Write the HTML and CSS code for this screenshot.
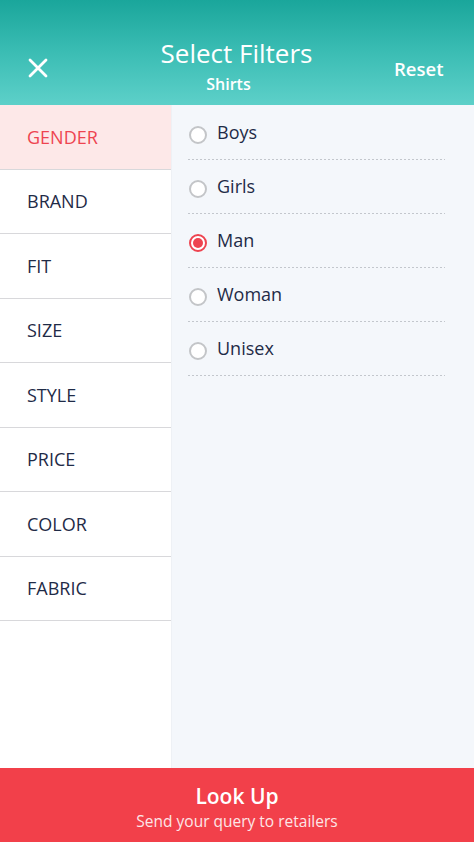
FILE: index.html
```html
<!DOCTYPE html>
<html>
<head>
<meta charset="utf-8">
<link rel="stylesheet" href="styles.css">
</head>
<body>
<div class="app">
  <header class="header">
    <div class="close">
      <svg width="20" height="20" viewBox="0 0 20 20"><path d="M2 2L18 18M18 2L2 18" stroke="#fff" stroke-width="2.8" stroke-linecap="round"/></svg>
    </div>
    <div class="titles">
      <div class="title">Select Filters</div>
      <div class="subtitle">Shirts</div>
    </div>
    <div class="reset">Reset</div>
  </header>
  <main class="main">
    <nav class="cats">
      <div class="cat active">GENDER</div>
      <div class="cat">BRAND</div>
      <div class="cat">FIT</div>
      <div class="cat">SIZE</div>
      <div class="cat">STYLE</div>
      <div class="cat">PRICE</div>
      <div class="cat">COLOR</div>
      <div class="cat">FABRIC</div>
    </nav>
    <section class="options">
      <div class="opt"><span class="radio"></span><span class="label">Boys</span></div>
      <div class="opt"><span class="radio"></span><span class="label">Girls</span></div>
      <div class="opt"><span class="radio on"></span><span class="label">Man</span></div>
      <div class="opt"><span class="radio"></span><span class="label">Woman</span></div>
      <div class="opt"><span class="radio"></span><span class="label">Unisex</span></div>
    </section>
  </main>
  <footer class="footer">
    <div class="f-title">Look Up</div>
    <div class="f-sub">Send your query to retailers</div>
  </footer>
</div>
</body>
</html>
```
FILE: styles.css
```css
* { box-sizing: border-box; }
html, body { margin: 0; padding: 0; }
body { font-family: "Open Sans", "Noto Sans", sans-serif; width: 474px; height: 842px; overflow: hidden; }
.app { display: flex; flex-direction: column; height: 842px; }
.header {
  height: 105px; flex: none;
  background: linear-gradient(to bottom, #1aa69b 0%, #3bbdb4 50%, #5dd0c9 100%);
  display: flex; align-items: flex-start; color: #fff;
}
.close { width: 80px; padding: 58px 0 0 28px; }
.close svg { display: block; }
.titles { flex: 1; text-align: center; padding-top: 36px; }
.title { font-size: 26px; line-height: 34px; font-weight: 400; }
.subtitle { font-size: 16px; line-height: 20px; font-weight: 600; margin-top: 4px; margin-right: 16px; }
.reset { width: 80px; padding: 56px 0 0 0; font-size: 18.5px; font-weight: 600; line-height: 26px; text-align: left; margin-left: 1px; }
.main { flex: 1; display: flex; min-height: 0; }
.cats { width: 172px; flex: none; background: #fff; border-right: 1px solid #eef1f5; }
.cat {
  height: 64.5px; display: flex; align-items: center; padding-left: 27px;
  font-size: 18px; color: #1f2b47; border-bottom: 1.5px solid #d8d8db;
}
.cat.active { background: #fde8e8; color: #ee4450; }
.options { flex: 1; background: #f4f7fb; padding: 1px 29px 0 16px; }
.opt {
  height: 54px; display: flex; align-items: center;
  background-image: repeating-linear-gradient(to right, #c3c7cd 0 2px, transparent 2px 4px);
  background-size: 100% 1px; background-repeat: no-repeat; background-position: left bottom;
}
.radio {
  width: 18px; height: 18px; border-radius: 50%; border: 2px solid #c3c5c8;
  margin-left: 1px; margin-right: 10px; flex: none; background: #fff; position: relative; top: 2px;
}
.radio.on { border-color: #ee4450; }
.radio.on::after {
  content: ""; position: absolute; left: 2px; top: 2px; width: 10px; height: 10px; border-radius: 50%; background: #ee4450;
}
.label { font-size: 18px; color: #1f2b47; position: relative; top: -1px; }
.footer {
  height: 74px; flex: none; background: #f2404a; color: #fff; text-align: center; padding-top: 14px;
}
.f-title { font-size: 21px; font-weight: 600; line-height: 28px; }
.f-sub { font-size: 15.5px; line-height: 22px; color: #fde6e7; }
```
